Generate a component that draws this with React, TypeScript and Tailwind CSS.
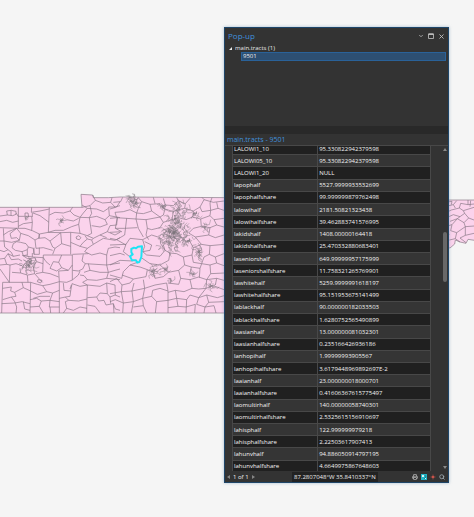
import { memo, useState } from 'react'
import { ChevronDown, Printer, Search, X } from 'lucide-react'
import { clsx } from 'clsx'

interface Field {
  name: string
  value: string
}

const FIELDS: Field[] = [
  { name: 'LALOWI1_10', value: '95.330822942379598' },
  { name: 'LALOWI05_10', value: '95.330822942379598' },
  { name: 'LALOWI1_20', value: 'NULL' },
  { name: 'lapophalf', value: '5527.9999933532699' },
  { name: 'lapophalfshare', value: '99.999999879762498' },
  { name: 'lalowihalf', value: '2181.50821323438' },
  { name: 'lalowihalfshare', value: '39.462883741576995' },
  { name: 'lakidshalf', value: '1408.00000164418' },
  { name: 'lakidshalfshare', value: '25.470332880683401' },
  { name: 'laseniorshalf', value: '649.99999957175999' },
  { name: 'laseniorshalfshare', value: '11.758321265769901' },
  { name: 'lawhitehalf', value: '5259.9999991618197' },
  { name: 'lawhitehalfshare', value: '95.151953675141499' },
  { name: 'lablackhalf', value: '90.000000182033503' },
  { name: 'lablackhalfshare', value: '1.6280752565490899' },
  { name: 'laasianhalf', value: '13.000000081032301' },
  { name: 'laasianhalfshare', value: '0.235166426936186' },
  { name: 'lanhopihalf', value: '1.99999993905567' },
  { name: 'lanhopihalfshare', value: '3.6179448969892697E-2' },
  { name: 'laaianhalf', value: '23.000000018000701' },
  { name: 'laaianhalfshare', value: '0.41606367615775497' },
  { name: 'laomultirhalf', value: '140.00000058740301' },
  { name: 'laomultirhalfshare', value: '2.5325615156910697' },
  { name: 'lahisphalf', value: '122.999999979218' },
  { name: 'lahisphalfshare', value: '2.22503617907413' },
  { name: 'lahunvhalf', value: '94.886050914797195' },
  { name: 'lahunvhalfshare', value: '4.6649975867648603' },
]

const STATE = 'M-6 67H246L243 28L278 30L280 38L325 38L360 36L690 38V384H-6Z'

const WEST_TRACTS = [
  'M55 67V130M0 128L55 130L75 130L97 137L118 147L145 142M0 93L22 90L20 78L34 76L48 79L48 88L38 92L22 90M48 84L55 94M33 76V91',
  'M55 94H95L97 112L70 116L55 124M95 67L94 82L120 78L148 72M75 94V84L84 84L86 96M97 84L97 96M99 84L120 92L147 112M97 112L95 137M0 110L20 106L38 112L55 108',
  'M148 67L145 142L165 136L190 136L215 125L236 118L240 97M148 90L165 82L190 84L210 78L218 67M210 78L222 90L240 97L268 98M246 60L262 70L250 84L240 97M200 104L220 108L236 100',
  'M246 67L270 62L286 46L278 30M286 46L308 54L332 52L336 38M332 52L345 66L360 62M270 62L275 85L268 98L275 145L262 152L240 145L236 118M262 70L290 72L310 80L325 70',
  'M268 98L290 94L315 104L328 92L326 66L345 66M275 122L300 126L322 118L315 104M328 92L360 98M352 96L350 120L330 122L322 140L345 150L360 142M322 140L300 150L280 160L262 152',
  'M0 168L12 168L10 130M10 150L25 140L50 130L62 145L85 152L105 165L118 158L118 147M12 168L35 172L58 166L62 145M50 130L30 146L34 160L50 158L58 166M105 165L108 190',
  'M118 147L116 160L135 158L150 168L182 143L212 142V208M145 142L182 143M150 168L158 186L165 190L185 176L182 143M165 190L158 208M108 190L130 188L158 196M185 176L212 184',
  'M212 172L240 184L250 172L262 162L275 165L280 178L262 190L254 200L275 210L300 204L320 210M228 156L236 152L243 158L238 164L230 162ZM212 142L240 145M262 162L255 152',
  'M280 160L275 165M280 178L310 160L345 166L360 158M300 150L320 158M262 190L240 184M320 210L325 190L345 186L360 188M130 210H217V285M130 210L128 262L108 266M97 216L130 218',
  'M217 208L265 206M250 208L246 228L256 236L248 252L235 258L218 256M256 236L320 240L360 234M320 210V240L325 262L345 256L360 252M265 236L270 256L300 262L325 262M252 262L270 256',
  'M40 176L36 188L46 196L66 200L82 194L85 186L78 176L62 172L50 170ZM85 186L100 190L102 208L118 208L118 188M102 188V208M66 200L70 212L82 210L82 194M70 212L97 216V204',
  'M0 196L12 200L24 194L34 202L40 214L60 210M0 222L14 220L24 206L40 214M12 168L14 186L24 194M24 206L34 224L55 222L66 228M14 220L20 238L0 240M20 238L30 240L48 236L66 242',
  'M8 292H92L90 384M8 292L5 384M30 240L28 292M0 252L14 272L28 292M60 250L62 264L82 270L84 292M84 270L104 266L118 282L128 292M66 210L84 222L104 218L110 230L100 244L104 266M110 230L129 236M36 262L62 264',
  'M92 292L112 298L128 302L150 298L178 290L176 258L205 256L217 240M128 262L150 266L176 276M155 240L150 250L170 258L185 248L176 232L160 230ZM185 210L176 232M150 240L138 230L130 218M185 248L205 256',
  'M178 290V384M262 300L260 384M217 285L235 270L240 258M217 285L200 292L178 290M248 292L262 284L252 272L240 270M262 284L290 286L320 280L360 284M248 292L262 300L300 304L320 294L345 300',
  'M8 310L34 306L32 318L44 322L48 334L34 336L8 344M44 322L70 308L92 318M34 336L44 350L50 366L48 384M5 356L44 354L66 350L90 356M70 350L74 372L90 376M66 292L70 308M114 284L126 286L122 294L112 290Z',
  'M92 318L112 328L140 320L158 324L178 316M90 344L110 340L124 348L150 346L178 350M124 348L118 364L130 384M158 324L150 346L148 366L178 366M90 366L118 364M128 302L140 320M150 366L152 384M100 340L120 334L150 334',
  'M190 294L192 316L212 318L210 334L196 336L206 346L196 350L200 370L190 384M212 318L216 296L240 304L262 300M178 340L196 336M206 346L236 348L261 342M200 370L220 376L240 366L261 370M214 300L210 312',
  'M262 338L290 336L296 348L312 346L318 360L340 356L346 372L360 376M290 336L300 324L322 326L330 336L345 330L360 336M320 294L322 326M330 336L332 356M262 360L285 364L300 384M340 356L342 384M325 262L320 280M345 300L346 330',
].join('')

const EAST_TRACTS = [
  'M38 37L32 50L10 52M84 37L95 50L120 58L150 56L165 72M30 50L20 66L0 72M0 100L20 98L15 82L40 80L60 74L80 84L78 102L20 98M95 50L85 70L80 84M130 37L135 56M120 58L125 78L100 86L80 84',
  'M78 102L108 104L150 96L125 78M22 98L16 130L35 140L0 142M78 102L85 130L100 156M50 100L44 150L20 164L48 180M16 130L44 130M44 130L82 128M108 104L112 130L125 134L150 128M0 160L20 164',
  'M0 180L48 178L60 160L98 164L125 150L150 158M98 164L104 184L98 200L110 210L150 214L165 196M48 178L40 200L58 214M104 170L125 180L120 196L98 200M0 212L30 205L44 210M112 130L108 150L116 164',
  'M94 218L120 236L150 240M0 240L30 226L68 228M82 232L60 240L40 260L35 280L0 270M60 240L90 246L112 254L108 275L70 282L36 270M112 254L130 262L135 280L160 275L175 262M0 290L20 280L36 300L60 294L70 282',
  'M36 300L34 320L0 326M34 320L66 318L72 294M66 318L70 350L40 354L34 320M70 350L64 384M0 350L16 344L40 354L38 384M100 284L104 310L66 318M104 310L135 300L170 294L174 318V384M104 310L98 340L70 350',
  'M98 340L125 334L140 350L174 346M125 334L128 316L150 310L174 318M140 350L136 384M98 340L100 362L110 384M70 366L100 362M174 294L206 298L212 280L240 284L246 310L222 320L196 316L174 322M196 316L200 340L174 346',
  'M200 340L230 344L240 330L266 338L290 330L322 338L342 332M230 344L228 384M200 340L204 364L174 368M204 364L228 366L256 358L254 384M266 338L260 358L285 366L282 384M290 330L296 352L285 366L312 362L318 384M296 352L342 350',
  'M240 284L266 276L290 284L288 310L266 338M240 266L244 246L270 250L275 236L300 240L320 234L342 242M270 250L268 278M300 240L302 266L290 284L320 280L342 286M302 266L342 264M288 310L310 302L342 314M320 280L316 300M246 310L266 312L288 310',
  'M160 40L166 60L150 66M166 60L190 62L205 48L200 37M205 48L226 56L240 40M226 56L224 70L250 78L270 66L282 44L276 37M282 44L310 52L342 48M306 38L300 54L302 76L276 80L270 66M302 76L324 70L342 76M324 70L320 52',
  'M250 78L248 96L272 102L300 92L302 76M272 102L274 124L300 128L320 120L342 126M300 92L312 104L342 100M312 104L320 120M300 128L296 150L316 158L342 150M248 96L228 104M274 124L250 130L236 144L256 156L296 150',
  'M256 156L274 178L300 182L342 178M274 178L250 188L240 170M300 182L298 208L316 216L342 206M250 188L246 210L220 216L200 206M246 210L250 232L275 236M298 208L282 216L275 236M316 216L320 234M220 216L224 240L244 246',
  'M150 96L160 112L150 128M165 72L160 90L150 96M165 72L190 80L205 74L224 70M190 80L186 104L160 112M186 104L205 98L228 104M150 158L152 176L165 196L180 204L200 206M165 196L160 180M180 204L176 226L150 240L175 262L206 256L224 240M206 256L212 280',
].join('')

const RIDGE_TRACTS =
  'M22 48L40 44L50 32M22 66L34 60L58 54L62 40L84 44M58 54L70 62L102 52M22 82L40 74L60 80L74 70L70 62M30 94L52 86L60 80M22 108L36 104L52 86L72 98L86 84L74 70M36 104L32 122L50 128L76 110L72 98M50 128L46 146L28 150M76 110V136L102 130M86 84L102 90M46 146L60 156M76 136L60 144L78 158M22 36L36 34L34 44M84 30V44L102 42M28 134L22 140M76 110L102 108M92 32L90 50M40 44L46 54'

const CYAN_TRACT = 'M64 192L72 188L78 190L84 185L96 184L95 200L94 216L88 231L82 233L78 226L66 226L60 214L68 208L64 202Z'

// small urban tracts: seeded so the map is the same on every render
function urbanTracts(cx: number, cy: number, radius: number, count: number) {
  let seed = cx * 31 + cy
  const next = () => {
    seed = (seed * 16807) % 2147483647
    return seed / 2147483647
  }
  next()
  next()
  let path = ''
  for (let i = 0; i < count; i++) {
    const spread = next()
    const turn = next() * Math.PI * 2
    const x = cx + Math.cos(turn) * spread * radius
    const y = cy + Math.sin(turn) * spread * radius
    const size = 3 + spread * 6
    // open outlines, so that neighbours read as shared borders
    for (let corner = 0; corner < 4; corner++) {
      const angle = (corner / 5) * Math.PI * 2 + turn + next()
      const reach = size * (0.6 + next() * 0.8)
      const px = Math.round(x + Math.cos(angle) * reach)
      const py = Math.round(y + Math.sin(angle) * reach)
      path += `${corner ? 'L' : 'M'}${px} ${py}`
    }
  }
  return path
}

const URBAN = [
  urbanTracts(522, 143, 46, 110),
  urbanTracts(540, 112, 52, 34),
  urbanTracts(504, 172, 38, 24),
  urbanTracts(566, 168, 28, 16),
  urbanTracts(596, 202, 20, 20),
  urbanTracts(580, 88, 30, 12),
  urbanTracts(394, 50, 24, 28),
  urbanTracts(490, 68, 14, 8),
  urbanTracts(538, 72, 28, 10),
  urbanTracts(616, 128, 18, 8),
  urbanTracts(86, 242, 24, 34),
  urbanTracts(184, 107, 14, 8),
  urbanTracts(79, 98, 6, 3),
  urbanTracts(460, 254, 22, 16),
  urbanTracts(496, 254, 14, 8),
  urbanTracts(513, 289, 8, 4),
  urbanTracts(634, 304, 16, 9),
  urbanTracts(580, 268, 18, 8),
].join('')

const TractMap = memo(() => (
  <svg
    className="absolute top-0 left-0 h-[517px] w-[474px]"
    viewBox="0 -555 1422 1551"
    aria-hidden="true"
  >
    <g stroke="#857683" strokeWidth="2" strokeLinejoin="round" fill="none">
      <path d={STATE} fill="#fbd3ec" />
      <path d={WEST_TRACTS} />
      <path d={EAST_TRACTS} transform="translate(330 0)" />
      <path d={URBAN} stroke="#7d757c" strokeWidth="1.3" />
      <g transform="translate(1320 15)">
        <path
          d="M0 30H110V152L84 148L78 160L60 156L46 150L44 162L30 174L0 168Z"
          fill="#fbd3ec"
        />
        <path d={RIDGE_TRACTS} />
      </g>
      <path
        d={CYAN_TRACT}
        transform="translate(330 0)"
        stroke="#1fe3f3"
        strokeWidth="6"
      />
    </g>
  </svg>
))
TractMap.displayName = 'TractMap'

function TitleBar() {
  return (
    <header className="flex h-4 items-center pr-[3px] pl-[3px]">
      <h1 className="flex-1 text-[8px] leading-4 text-[#4191db]">Pop-up</h1>
      <div className="flex items-center gap-1 text-[#c4c4c4]">
        <button type="button" aria-label="Options">
          <ChevronDown className="size-[6px]" strokeWidth={3} />
        </button>
        <button type="button" aria-label="Maximize">
          <svg className="size-[6px]" viewBox="0 0 6 6" fill="none">
            <path d="M.5 1H5.5V5.5H.5Z" stroke="currentColor" strokeWidth=".8" />
            <path d="M.5 1.2H5.5" stroke="currentColor" strokeWidth="1.4" />
          </svg>
        </button>
        <button type="button" aria-label="Close">
          <X className="size-[7px]" strokeWidth={3} />
        </button>
      </div>
    </header>
  )
}

interface FeatureTreeProps {
  selected: string
  onSelect: (id: string) => void
}

function FeatureTree({ selected, onSelect }: FeatureTreeProps) {
  return (
    <div className="h-[82px] pr-[2px]">
      <div className="flex h-2 items-center gap-[3px] pl-1 text-[6px] leading-2 text-[#eaeaea]">
        <svg className="size-[3px]" viewBox="0 0 3 3" fill="currentColor">
          <path d="M3 0V3H0Z" />
        </svg>
        main.tracts (1)
      </div>
      <button
        type="button"
        onClick={() => onSelect('9501')}
        className={clsx(
          'ml-4 flex h-[9px] w-[205px] items-center border pl-px text-[6px] leading-[7px] text-[#eeeeee]',
          selected === '9501'
            ? 'border-[#2a6299] bg-[#2d4f72]'
            : 'border-transparent',
        )}
      >
        9501
      </button>
    </div>
  )
}

function FieldTable() {
  return (
    <div className="flex h-[326px] overflow-hidden border-t border-[#484848] bg-[#333333]">
      <div className="-mt-[4px] h-[331px] flex-1 pr-[11px] pl-[7px]">
        <table className="h-full w-full table-fixed border-collapse text-left text-[6px] leading-[8px] text-[#f4f4f4]">
          <colgroup>
            <col className="w-[43%]" />
            <col />
          </colgroup>
          <tbody>
            {FIELDS.map((field) => (
              <tr
                key={field.name}
                className="border border-[#484848] odd:bg-[#202020] even:bg-[#353535]"
              >
                <th
                  scope="row"
                  className="border-r border-[#484848] py-0 pl-px font-normal"
                >
                  {field.name}
                </th>
                <td className="py-0 pl-px">{field.value}</td>
              </tr>
            ))}
          </tbody>
        </table>
      </div>
      <div className="flex w-[6px] flex-col items-center text-[#8a8a8a]">
        <svg className="mt-[2px] h-[3px] w-[4px]" viewBox="0 0 4 3" fill="currentColor">
          <path d="M2 0L4 3H0Z" />
        </svg>
        <div className="mt-[81px] h-[50px] w-1 rounded-full bg-[#686868]" />
        <svg className="mt-auto mb-[2px] h-[3px] w-[4px]" viewBox="0 0 4 3" fill="currentColor">
          <path d="M0 0H4L2 3Z" />
        </svg>
      </div>
    </div>
  )
}

function StatusBar() {
  return (
    <footer className="flex h-[11px] items-center bg-[#333333] pr-[3px] pl-[2px] text-[6px] leading-[10px] text-[#eeeeee]">
      <div className="flex w-[65px] items-center gap-[3px]">
        <button type="button" aria-label="Previous" className="text-[#858585]">
          <svg className="h-[4px] w-[3px]" viewBox="0 0 3 4" fill="currentColor">
            <path d="M3 0V4L0 2Z" />
          </svg>
        </button>
        1 of 1
        <button type="button" aria-label="Next" className="text-[#858585]">
          <svg className="h-[4px] w-[3px]" viewBox="0 0 3 4" fill="currentColor">
            <path d="M0 0V4L3 2Z" />
          </svg>
        </button>
      </div>
      <div className="bg-[#222222] px-[2px] whitespace-nowrap">
        87.2807048°W 35.8410337°N
      </div>
      <div className="ml-auto flex items-center gap-[3px]">
        <button type="button" aria-label="Print">
          <Printer className="size-[6px] text-[#b0b0b0]" strokeWidth={3} />
        </button>
        <button type="button" aria-label="Select feature">
          <svg className="size-[6px]" viewBox="0 0 6 6">
            <path d="M0 0H6V6H0Z" fill="#22b5c6" />
            <path d="M1 1H3V3H1ZM4 4H5V5H4Z" fill="#d9f6f8" />
            <path d="M4 1L5 3L3 5" stroke="#15717f" strokeWidth=".7" fill="none" />
          </svg>
        </button>
        <button type="button" aria-label="Flash feature">
          <svg className="size-[6px]" viewBox="0 0 6 6">
            <path d="M3 .5V5.5M.5 3H5.5" stroke="#9c4a44" strokeWidth=".8" />
            <circle cx="3" cy="3" r="1.3" fill="#c9534a" />
          </svg>
        </button>
        <button type="button" aria-label="Zoom to feature">
          <Search className="size-[6px] text-[#a8b4bc]" strokeWidth={3} />
        </button>
      </div>
    </footer>
  )
}

function PopupWindow() {
  const [selected, setSelected] = useState('9501')

  return (
    <section className="relative w-[225px] border border-[#1f4669] bg-[#333333] shadow-[0_0_3px_rgba(110,150,180,0.6)]">
      <TitleBar />
      <FeatureTree selected={selected} onSelect={setSelected} />
      <div className="h-2 bg-[#292929]" />
      <h2 className="h-[11px] pl-[2px] text-[7px] leading-[11px] text-[#4191db]">
        main.tracts - {selected}
      </h2>
      <FieldTable />
      <StatusBar />
    </section>
  )
}

export default function App() {
  return (
    <main className="relative flex min-h-screen items-start justify-end overflow-hidden bg-[#f5f5f5] pt-[27px] pr-[25px] pb-8 font-['Open_Sans','Noto_Sans',sans-serif]">
      <TractMap />
      <PopupWindow />
    </main>
  )
}
